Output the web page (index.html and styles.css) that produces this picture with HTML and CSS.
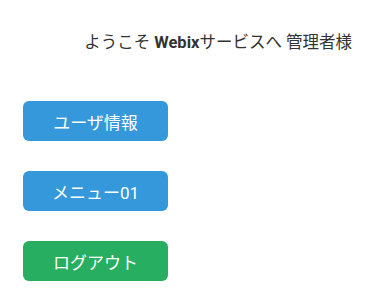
FILE: index.html
```html
<!DOCTYPE html>
<html lang="ja">
<head>
<meta charset="utf-8">
<link rel="stylesheet" href="styles.css">
</head>
<body>
<div class="page">
  <div class="header">ようこそ <b>Webix</b>サービスへ 管理者様</div>
  <div class="menu">
    <button class="btn blue">ユーザ情報</button>
    <button class="btn blue">メニュー01</button>
    <button class="btn green">ログアウト</button>
  </div>
</div>
</body>
</html>
```
FILE: styles.css
```css
html, body {
  margin: 0;
  padding: 0;
  background: #fff;
}
.page {
  width: 373px;
  height: 300px;
  font-family: Roboto, "Noto Sans CJK JP", sans-serif;
  color: #333;
}
.header {
  display: flex;
  justify-content: flex-end;
  white-space: pre;
  padding: 31px 21px 0 0;
  font-size: 16.5px;
  line-height: 24px;
  height: 66px;
  box-sizing: border-box;
}
.header b {
  font-weight: 700;
}
.menu {
  display: flex;
  flex-direction: column;
  gap: 30px;
  padding: 35px 0 0 23px;
}
.btn {
  width: 145px;
  height: 40px;
  border: none;
  border-radius: 6px;
  color: #fff;
  font-family: Roboto, "Noto Sans CJK JP", sans-serif;
  font-size: 17px;
  padding: 0;
}
.blue { background: #3498db; }
.green { background: #27ae60; }
```
